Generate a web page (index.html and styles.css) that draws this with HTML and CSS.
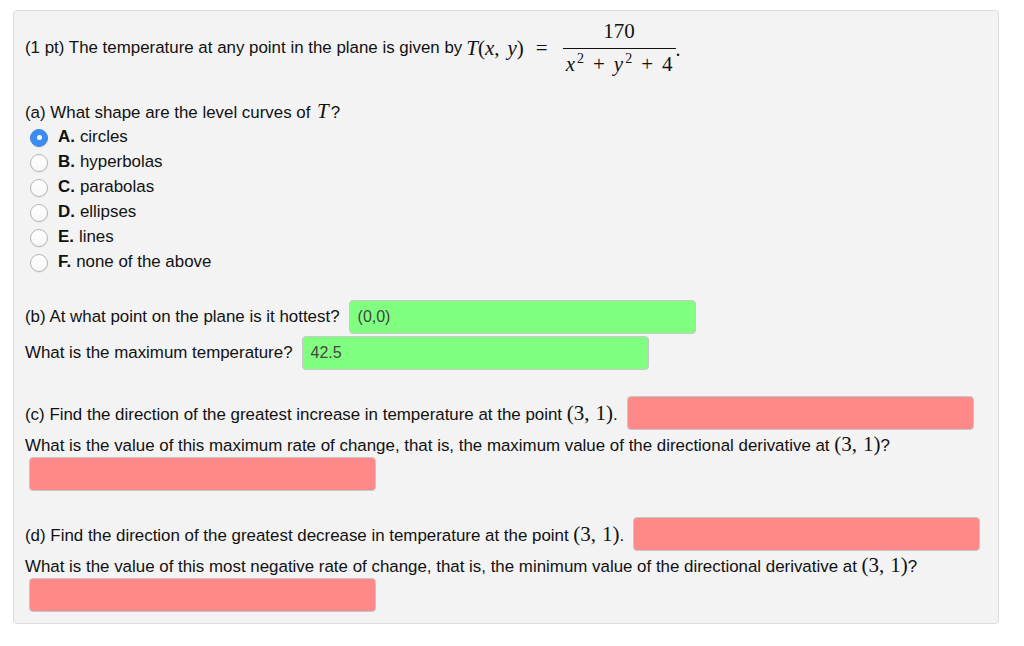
FILE: index.html
```html
<!DOCTYPE html>
<html>
<head>
<meta charset="utf-8">
<link rel="stylesheet" href="styles.css">
</head>
<body>
<div class="problem">
  <div class="intro">
    <span class="txt">(1 pt) The temperature at any point in the plane is given by</span>
    <span class="math lead"><i>T</i>(<i>x</i>,<span class="thin wide"></span><i>y</i>)<span class="rel">=</span></span>
    <span class="frac">
      <span class="num">170</span>
      <span class="den"><i>x</i><sup>2</sup><span class="op">+</span><i>y</i><sup>2</sup><span class="op">+</span>4</span>
    </span>
    <span class="dot">.</span>
  </div>

  <p class="q-a">(a) What shape are the level curves of <span class="math"><i>T</i></span>?</p>
  <ul class="choices">
    <li><span class="radio checked"></span><b>A.</b> circles</li>
    <li><span class="radio"></span><b>B.</b> hyperbolas</li>
    <li><span class="radio"></span><b>C.</b> parabolas</li>
    <li><span class="radio"></span><b>D.</b> ellipses</li>
    <li><span class="radio"></span><b>E.</b> lines</li>
    <li><span class="radio"></span><b>F.</b> none of the above</li>
  </ul>

  <div class="section">
    <div class="row"><span class="label">(b) At what point on the plane is it hottest?</span><span class="answer correct">(0,0)</span></div>
    <div class="row row-tight"><span class="label">What is the maximum temperature?</span><span class="answer correct">42.5</span></div>
  </div>

  <div class="section">
    <div class="row"><span class="label">(c) Find the direction of the greatest increase in temperature at the point <span class="math">(3,<span class="thin"></span>1)</span>.</span><span class="answer wrong"></span></div>
    <p class="line">What is the value of this maximum rate of change, that is, the maximum value of the directional derivative at <span class="math">(3,<span class="thin"></span>1)</span>?</p>
    <div class="row"><span class="answer wrong flush"></span></div>
  </div>

  <div class="section">
    <div class="row"><span class="label">(d) Find the direction of the greatest decrease in temperature at the point <span class="math">(3,<span class="thin"></span>1)</span>.</span><span class="answer wrong"></span></div>
    <p class="line">What is the value of this most negative rate of change, that is, the minimum value of the directional derivative at <span class="math">(3,<span class="thin"></span>1)</span>?</p>
    <div class="row"><span class="answer wrong flush"></span></div>
  </div>
</div>
</body>
</html>
```

FILE: styles.css
```css
html, body {
  margin: 0;
  padding: 0;
  background: #ffffff;
}

body {
  padding: 10px 0 0 13px;
  font-family: "Liberation Sans", Arial, sans-serif;
  font-size: 16.9px;
  color: #111;
}

.problem {
  width: 984px;
  height: 612px;
  box-sizing: content-box;
  background: #f3f3f3;
  border: 1px solid #dcdcdc;
  border-radius: 4px;
  padding: 0;
  position: relative;
}

.problem > * {
  margin-left: 11px;
}

.intro {
  height: 56px;
  margin-top: 9px;
  display: flex;
  align-items: center;
  white-space: nowrap;
}

.math {
  font-family: "Liberation Serif", "Times New Roman", serif;
  font-size: 21px;
  letter-spacing: 0;
}

.math i {
  font-style: italic;
}

.thin {
  display: inline-block;
  width: 6px;
}

.thin.wide {
  width: 8px;
}

.rel {
  margin: 0 15px 0 12px;
}

.op {
  margin: 0 9px;
}

.lead {
  margin-left: 4px;
  margin-right: 0;
}

.frac {
  display: inline-flex;
  flex-direction: column;
  align-items: center;
  font-family: "Liberation Serif", "Times New Roman", serif;
  font-size: 21px;
  margin-top: -2px;
}

.num {
  padding: 0 4px 6px;
  line-height: 22px;
}

.den {
  border-top: 1px solid #111;
  padding: 4px 3px 0;
  line-height: 22px;
}

.den i {
  margin-right: 1px;
}

.den sup {
  font-size: 14px;
  vertical-align: 8px;
  line-height: 0;
  margin-left: 1px;
}

.dot {
  font-family: "Liberation Serif", serif;
  font-size: 20px;
  align-self: center;
  margin-top: 2px;
}

.q-a {
  margin-top: 25px;
  margin-bottom: 0;
  line-height: 20px;
  height: 20px;
}

.q-a .math {
  margin: 0 2px;
}

.choices {
  list-style: none;
  margin-top: 3px;
  margin-bottom: 0;
  padding: 0;
}

.choices li {
  height: 25px;
  line-height: 25px;
  display: flex;
  align-items: center;
}

.choices b {
  margin-right: 5px;
}

.radio {
  width: 16px;
  height: 16px;
  border-radius: 50%;
  border: 1px solid #b5b5b5;
  background: linear-gradient(#ffffff, #f7f7f7);
  margin: 2px 10px 0 5px;
  box-sizing: content-box;
  box-shadow: 0 1px 1px rgba(0,0,0,0.06);
  position: relative;
  flex: none;
}

.radio.checked {
  border-color: #3a86e6;
  background: #3d8df0;
}

.radio.checked::after {
  content: "";
  position: absolute;
  left: 5.5px;
  top: 5.5px;
  width: 5px;
  height: 5px;
  border-radius: 50%;
  background: #ffffff;
}

.section {
  margin-top: 26px;
}

.row {
  display: flex;
  align-items: center;
  height: 34px;
  white-space: nowrap;
}

.row-tight {
  margin-top: 2px;
}

.label {
  margin-right: 9px;
}

.answer {
  display: flex;
  align-items: center;
  box-sizing: border-box;
  width: 347px;
  height: 34px;
  padding: 0 8px;
  border: 1px solid #c8c8c8;
  border-radius: 4px;
  color: #444;
  font-size: 16px;
}

.answer.flush {
  margin-left: 4px;
}

.correct {
  background: #80ff80;
}

.wrong {
  background: #ff8888;
}

.line {
  margin: 4px 0 3px;
  line-height: 20px;
  height: 20px;
  white-space: nowrap;
}
```
